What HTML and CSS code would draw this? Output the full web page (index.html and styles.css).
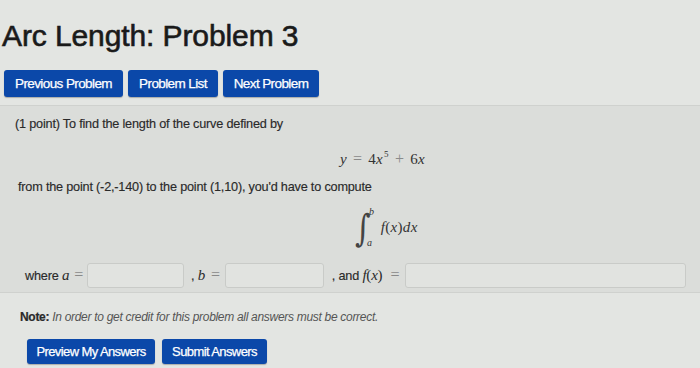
FILE: index.html
```html
<!DOCTYPE html>
<html>
<head>
<meta charset="utf-8">
<link rel="stylesheet" href="styles.css">
</head>
<body>
<h1 class="title">Arc Length: Problem 3</h1>
<nav class="nav">
  <button class="btn btn-prev">Previous Problem</button>
  <button class="btn btn-list">Problem List</button>
  <button class="btn btn-next">Next Problem</button>
</nav>
<section class="problem">
  <p class="intro">(1 point) To find the length of the curve defined by</p>
  <div class="eq"><span class="mi">y</span><span class="mo">=</span>4<span class="mi">x</span><sup>5</sup><span class="mo">+</span>6<span class="mi">x</span></div>
  <p class="from">from the point (-2,-140) to the point (1,10), you'd have to compute</p>
  <div class="integral">
    <span class="int">∫</span>
    <span class="limits"><span class="up mi">b</span><span class="lo mi">a</span></span>
    <span class="integrand"><span class="mi">f</span>(<span class="mi">x</span>)<span class="mi">dx</span></span>
  </div>
  <div class="answers">
    <span class="lbl">where <span class="mi">a</span><span class="mo">=</span></span>
    <span class="box box-a"></span>
    <span class="lbl lbl-b">, <span class="mi">b</span><span class="mo">=</span></span>
    <span class="box box-b"></span>
    <span class="lbl lbl-f">, and <span class="mi">f</span><span class="mp">(</span><span class="mi">x</span><span class="mp">)</span><span class="mo">=</span></span>
    <span class="box box-f"></span>
  </div>
</section>
<p class="note"><b>Note:</b> <i>In order to get credit for this problem all answers must be correct.</i></p>
<div class="submit">
  <button class="btn btn-preview">Preview My Answers</button>
  <button class="btn btn-submit">Submit Answers</button>
</div>
</body>
</html>
```

FILE: styles.css
```css
html, body {
  margin: 0;
  padding: 0;
  background: #e3e5e2;
  font-family: "Liberation Sans", Arial, sans-serif;
  color: #2a2a2a;
  width: 700px;
  height: 368px;
  overflow: hidden;
}
.title {
  margin: 0;
  padding: 19px 0 0 2px;
  font-size: 30px;
  font-weight: normal;
  color: #1a1a1a;
  line-height: 34px;
  letter-spacing: -0.1px;
  -webkit-text-stroke: 0.6px #1a1a1a;
}
.nav {
  display: flex;
  gap: 5px;
  padding: 17px 0 0 4px;
}
.btn {
  background: #0b48a9;
  color: #fff;
  border: none;
  border-radius: 3px;
  font-family: "Liberation Sans", Arial, sans-serif;
  font-size: 13.5px;
  letter-spacing: -0.6px;
  -webkit-text-stroke: 0.25px #fff;
  padding: 0;
  height: 27px;
  box-shadow: 0 1px 1px rgba(0,0,0,0.25);
}
.btn-prev { width: 119px; }
.btn-list { width: 90px; }
.btn-next { width: 96px; }
.problem {
  margin-top: 8px;
  background: #dbddda;
  border-top: 1px solid #cfd1ce;
  border-bottom: 1px solid #cfd1ce;
  height: 188px;
  box-sizing: border-box;
  padding: 11px 0 0 15px;
  font-size: 12.7px;
  letter-spacing: -0.2px;
  -webkit-text-stroke: 0.15px #2a2a2a;
}
.intro { margin: 0; }
.eq {
  font-family: "Liberation Serif", serif;
  font-size: 15px;
  color: #333;
  padding-left: 325px;
  margin-top: 18px;
  height: 18px;
  letter-spacing: 0.3px;
  -webkit-text-stroke: 0;
}
.eq sup { font-size: 9px; vertical-align: 7px; margin-left: 1px; }
.eq .mo { margin: 0 6px; }
.mi { font-family: "Liberation Serif", serif; font-style: italic; }
.mo { color: #8a8a8a; margin: 0 5px; font-family: "Liberation Serif", serif; font-size: 16px; -webkit-text-stroke: 0; }
.mp { font-family: "Liberation Serif", serif; }
.from { margin: 13px 0 0 3px; }
.integral {
  display: flex;
  align-items: center;
  margin: 12px 0 0 340px;
  height: 42px;
  font-family: "Liberation Serif", serif;
  color: #333;
  -webkit-text-stroke: 0;
}
.int {
  font-family: "DejaVu Serif", serif;
  font-size: 30px;
  font-style: italic;
  font-weight: 300;
  transform: scaleY(1.25);
  color: #444;
  width: 13px;
}
.limits {
  display: flex;
  flex-direction: column;
  justify-content: space-between;
  height: 42px;
  font-size: 10px;
  margin-left: 1px;
}
.limits .lo { margin-left: -2px; }
.integrand { font-size: 15px; margin-left: 7px; letter-spacing: 0.3px; }
.answers {
  display: flex;
  align-items: center;
  margin: 14px 0 0 10px;
  height: 26px;
}
.lbl { white-space: pre; }
.lbl .mi, .lbl .mp { font-size: 15px; -webkit-text-stroke: 0; }
.lbl .mo { margin: 0 4px 0 5px; }
.box {
  height: 25px;
  box-sizing: border-box;
  background: #e1e3e0;
  border: 1px solid #c9cbc8;
  border-radius: 3px;
}
.box-a { width: 97px; }
.box-b { width: 99px; }
.box-f { width: 281px; }
.lbl-b { margin-left: 7px; }
.lbl-b .mo { margin: 0 5px 0 6px; }
.lbl-f { margin-left: 8px; }
.lbl-f .mo { margin: 0 6px 0 8px; }
.note {
  margin: 17px 0 0 20px;
  font-size: 12px;
  letter-spacing: -0.3px;
  color: #2a2a2a;
}
.note b { -webkit-text-stroke: 0.2px #2a2a2a; }
.note i { color: #555; }
.submit {
  display: flex;
  gap: 7px;
  padding: 15px 0 0 27px;
}
.btn-preview { width: 128px; height: 25px; font-size: 13px; }
.btn-submit { width: 105px; height: 25px; font-size: 13px; }
```
